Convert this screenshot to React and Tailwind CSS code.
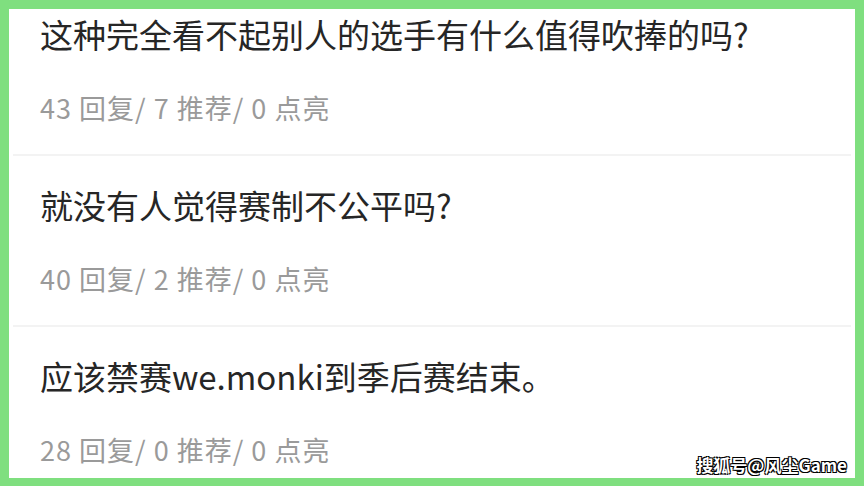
import React from 'react';

const posts = [
  { title: '这种完全看不起别人的选手有什么值得吹捧的吗?', replies: 43, recs: 7, likes: 0 },
  { title: '就没有人觉得赛制不公平吗?', replies: 40, recs: 2, likes: 0 },
  { title: '应该禁赛we.monki到季后赛结束。', replies: 28, recs: 0, likes: 0 },
];

const font = { fontFamily: '"Noto Sans CJK SC", "Noto Sans", sans-serif' };

const App = () => {
  return (
    <div className="w-[864px] h-[486px] bg-[#7fdf7f] pt-[9px] pl-[9px] pr-[9px] pb-[8px]" style={font}>
      <div className="relative h-full bg-white overflow-hidden">
        {posts.map((p, i) => (
          <div key={i}>
            {i > 0 && <div className="mx-[4px] h-[2px] bg-[#f3f3f3]" />}
            <div className={`pl-[31px] ${i === 0 ? 'pt-[5px]' : 'pt-[29px]'} pb-[30px]`}>
              <div className="text-[33px] leading-[40px] text-[#262626]">{p.title}</div>
              <div className="mt-[37px] text-[27px] leading-[33px] tracking-[1px] text-[#9a9a9a]">
                {p.replies} 回复/ {p.recs} 推荐/ {p.likes} 点亮
              </div>
            </div>
          </div>
        ))}
        <div className="absolute right-[8px] bottom-[3px] text-[17px] font-bold leading-[20px] text-white [text-shadow:1px_1px_0_#000,-1px_-1px_0_#000,1px_-1px_0_#000,-1px_1px_0_#000]">
          搜狐号@风尘Game
        </div>
      </div>
    </div>
  );
};

export default App;
